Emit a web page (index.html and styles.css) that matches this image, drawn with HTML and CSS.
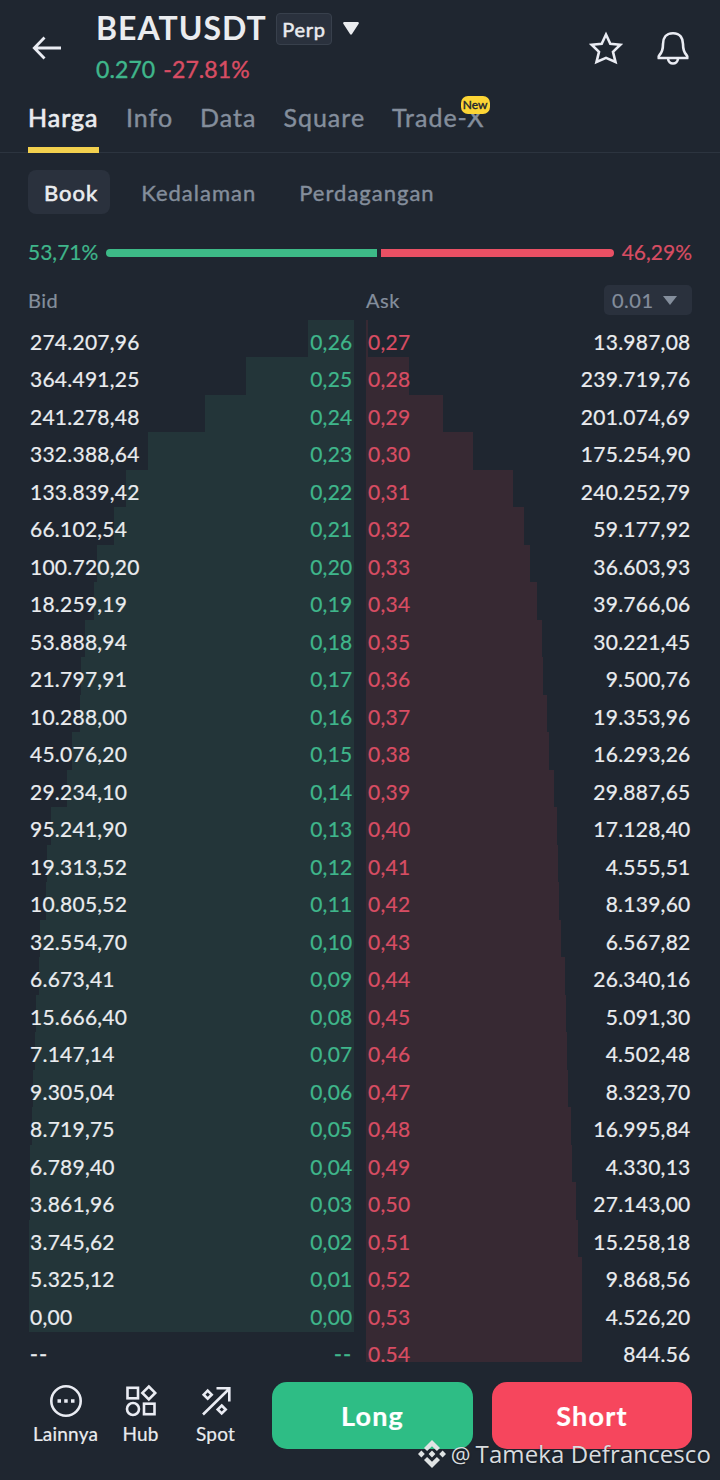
FILE: index.html
```html
<!DOCTYPE html>
<html lang="id">
<head>
  <meta charset="UTF-8" />
  <meta name="viewport" content="width=device-width, initial-scale=1.0"/>
  <title>BEATUSDT Perp</title>
  <link rel="stylesheet" href="styles.css">
</head>
<body>
  <div class="screen">
    <header class="header">
      <svg class="back" width="30" height="24" viewBox="0 0 30 24">
        <path d="M29 12H3M12.500 1.500L2.300 12L12.500 22.500" />
      </svg>
      <div class="pair">
        <div class="pair-top">
          <h1>BEATUSDT</h1>
          <span class="perp">Perp</span>
          <svg class="caret" width="16" height="13" viewBox="0 0 16 13"><path d="M1 0H15Q16.500 0.500 15.500 2L9 12Q8 13.500 7 12L0.500 2Q-0.500 0.500 1 0Z" /></svg>
        </div>
        <div class="pair-price">
          <span class="green">0.270</span>
          <span class="red">-27.81%</span>
        </div>
      </div>
      <div class="actions">
        <svg width="34" height="34" viewBox="0 0 34 34">
          <path d="M17 3.500L21.300 12.700L31.300 13.800L24 20.900L26.500 31L17 26.800L7.500 31L10 20.900L2.700 13.800L12.700 12.700Z" />
        </svg>
        <svg width="34" height="36" viewBox="0 0 34 36">
          <path d="M17 2.300C9.500 2.300 7 7.500 7 13C7 19.500 6 21.500 3.500 24Q2.300 25.200 2.700 27H31.300Q31.700 25.200 30.500 24C28 21.500 27 19.500 27 13C27 7.500 24.500 2.300 17 2.300ZM12 27.500C12.500 34.200 21.500 34.200 22 27.500" />
        </svg>
      </div>
    </header>

    <nav class="tabs">
      <a class="tab active">Harga</a>
      <a class="tab">Info</a>
      <a class="tab">Data</a>
      <a class="tab">Square</a>
      <a class="tab">Trade-X<span class="new">New</span></a>
    </nav>

    <nav class="subtabs">
      <a class="subtab active">Book</a>
      <a class="subtab">Kedalaman</a>
      <a class="subtab">Perdagangan</a>
    </nav>

    <div class="ratio">
      <span class="green">53,71%</span>
      <div class="ratio-bar">
        <div class="ratio-bid" style="flex-grow: 53.71"></div>
        <div class="ratio-ask" style="flex-grow: 46.29"></div>
      </div>
      <span class="red">46,29%</span>
    </div>

    <div class="book-head">
      <span>Bid</span>
      <span>Ask</span>
      <span class="step">0.01
        <svg width="14" height="9" viewBox="0 0 14 9"><path d="M0 0H14L7 9Z" /></svg>
      </span>
    </div>

    <main class="book">
      <div class="side" id="bids"></div>
      <div class="side" id="asks"></div>
    </main>

    <footer class="footer">
      <div class="item">
        <svg width="34" height="34" viewBox="0 0 34 34">
          <circle cx="17" cy="17" r="14.700" />
          <path class="fill" d="M8.500 15.200H12V18.700H8.500ZM15.200 15.200H18.700V18.700H15.200ZM22 15.200H25.500V18.700H22Z" />
        </svg>
        <span>Lainnya</span>
      </div>
      <div class="item">
        <svg width="34" height="34" viewBox="0 0 34 34">
          <rect x="3.500" y="3.800" width="10.500" height="10.500" />
          <path d="M24.800 2.500L31.200 8.900L24.800 15.300L18.400 8.900Z" />
          <circle cx="9" cy="25" r="6" />
          <rect x="20" y="19.700" width="10.500" height="10.500" />
        </svg>
        <span>Hub</span>
      </div>
      <div class="item">
        <svg width="34" height="34" viewBox="0 0 34 34">
          <path d="M4 30.500L30 5M17.500 4.300H30.300V17.500" />
          <path d="M8.700 6.700L12.700 10.700L8.700 14.700L4.700 10.700ZM22.700 21.500L26.700 25.500L22.700 29.500L18.700 25.500Z" />
        </svg>
        <span>Spot</span>
      </div>
      <button class="btn long">Long</button>
      <button class="btn short">Short</button>
    </footer>

    <div class="credit">
      <svg width="28" height="28" viewBox="0 0 28 28">
        <path d="M14 0L22 8L18.900 11.100L14 6.200L9.100 11.100L6 8ZM14 28L22 20L18.900 16.900L14 21.800L9.100 16.900L6 20ZM14 10.600L17.400 14L14 17.400L10.600 14ZM3.400 10.600L6.800 14L3.400 17.400L0 14ZM24.600 10.600L28 14L24.600 17.400L21.200 14Z" />
      </svg>
      <span class="at">@</span>
      <span>Tameka Defrancesco</span>
    </div>
  </div>

  <script src="book.js"></script>
</body>
</html>
```
FILE: styles.css
```css
* {
  box-sizing: border-box;
}
body {
  margin: 0;
  background-color: #1f2630;
  color: #eaecef;
  font-family: Lato, "Open Sans", sans-serif;
  -webkit-text-stroke: 0.2px currentColor;
}
svg {
  display: block;
  fill: none;
  stroke: #eaecf3;
  stroke-width: 2.6;
}
.screen {
  position: relative;
  width: 720px;
  height: 1480px;
  overflow: hidden;
}
.green {
  color: #3fb68b;
}
.red {
  color: #d84d63;
}

.header {
  display: flex;
  height: 96px;
  padding: 0 30px 0 32px;
}
.back {
  margin-top: 36px;
  stroke-width: 2.8;
}
.pair {
  flex: 1;
  padding: 9px 0 0 34px;
}
.pair-top {
  display: flex;
  align-items: center;
  height: 40px;
}
h1 {
  margin: -3px 0 0;
  width: 180px;
  font-size: 32px;
  font-weight: 700;
  letter-spacing: 1px;
  -webkit-text-stroke: 0;
}
.perp {
  width: 56px;
  height: 32px;
  border: 1px solid #38404c;
  border-radius: 4px;
  background-color: #2a313d;
  font-size: 20px;
  letter-spacing: 0.8px;
  line-height: 31px;
  text-align: center;
  -webkit-text-stroke: 0.5px currentColor;
}
.caret {
  margin: -2px 0 0 11px;
  fill: #eaecef;
  stroke: none;
}
.pair-price {
  display: flex;
  gap: 8px;
  font-size: 23px;
  letter-spacing: 0.1px;
  line-height: 40px;
  -webkit-text-stroke: 0.4px currentColor;
}
.actions {
  display: flex;
  gap: 33px;
  padding-top: 31px;
}

.tabs {
  display: flex;
  gap: 27px;
  height: 57px;
  padding-left: 28px;
  border-bottom: 1px solid #2c343f;
  color: #848e9c;
  font-size: 25px;
  letter-spacing: 1px;
  line-height: 43px;
  -webkit-text-stroke: 0.4px currentColor;
}
.tab {
  position: relative;
  height: 57px;
}
.tab.active {
  width: 71px;
  border-bottom: 6px solid #f2d04e;
  color: #eaecef;
  -webkit-text-stroke: 0.7px currentColor;
}
.new {
  position: absolute;
  top: 0;
  right: -5px;
  width: 29px;
  height: 18px;
  border-radius: 7px;
  background-color: #fcd535;
  color: #202630;
  font-size: 12px;
  letter-spacing: 0;
  line-height: 18px;
  text-align: center;
}

.subtabs {
  display: flex;
  padding: 17px 28px 0;
  color: #848e9c;
  font-size: 22px;
  letter-spacing: 1px;
  line-height: 46px;
  -webkit-text-stroke: 0.4px currentColor;
}
.subtab {
  height: 44px;
  padding: 0 12px 0 16px;
  margin-right: 15px;
  border-radius: 8px;
}
.subtab.active {
  background-color: #2a313d;
  color: #eaecef;
  -webkit-text-stroke: 0.6px currentColor;
}

.ratio {
  display: flex;
  align-items: center;
  gap: 8px;
  height: 50px;
  margin: 14px 28px 0;
  font-size: 21px;
}
.ratio span {
  padding-bottom: 3px;
}
.ratio-bar {
  display: flex;
  flex: 1;
  gap: 4px;
}
.ratio-bid {
  height: 8px;
  border-radius: 4px 0 0 4px;
  background-color: #3dba87;
}
.ratio-ask {
  height: 8px;
  border-radius: 0 4px 4px 0;
  background-color: #ea5064;
}

.book-head {
  display: grid;
  grid-template-columns: 338px 238px 88px;
  align-items: center;
  height: 41px;
  padding: 3px 28px 0;
  color: #848e9c;
  font-size: 20px;
  letter-spacing: 0.5px;
}
.step {
  display: flex;
  align-items: center;
  gap: 9px;
  height: 30px;
  padding-left: 8px;
  border-radius: 5px;
  background-color: #2a313d;
}
.step svg {
  fill: #848e9c;
  stroke: none;
}

.book {
  display: flex;
  gap: 12px;
  height: 1043px;
  padding: 0.5px 28px 0;
  overflow: hidden;
}
.side {
  width: 326px;
}
.row {
  display: flex;
  justify-content: space-between;
  height: 37.5px;
  padding: 6px 2px 0;
  background-repeat: no-repeat;
  font-size: 21px;
  line-height: 31px;
  letter-spacing: 0.25px;
}
.row.bid {
  background-image: linear-gradient(#233539, #233539);
  background-position: right top;
}
.row.ask {
  background-image: linear-gradient(#372933, #372933);
}
.row span:last-child {
  margin-right: -0.5px;
}
.row.empty {
  letter-spacing: 1.5px;
  -webkit-text-stroke: 0.5px currentColor;
}

.footer {
  display: flex;
  height: 118px;
  padding: 20px 28px 0;
}
.item {
  display: flex;
  flex-direction: column;
  align-items: center;
  width: 75px;
  font-size: 19px;
  letter-spacing: 0.2px;
}
.item span {
  margin-top: 4px;
}
.item svg {
  margin-top: 2px;
}
.item .fill {
  fill: #eaecf3;
  stroke: none;
}
.btn {
  width: 200px;
  height: 67px;
  padding: 0;
  border: none;
  border-radius: 15px;
  color: #fff;
  font-family: inherit;
  font-size: 27px;
  font-weight: 700;
  letter-spacing: 1.2px;
}
.long {
  width: 201px;
  margin: 0 19px;
  background-color: #2ebd85;
}
.short {
  background-color: #f6465d;
}

/* credit line over the buttons */
.credit {
  position: absolute;
  right: 9px;
  bottom: 10px;
  display: flex;
  align-items: center;
  gap: 5px;
  color: #d9dcdf;
  font-family: "Open Sans", sans-serif;
  font-size: 24px;
  letter-spacing: 0.1px;
  text-shadow: 0 1px 2px rgba(0,0,0,0.4);
  -webkit-text-stroke: 0;
}
.credit svg {
  fill: #e0e3e4;
  stroke: none;
}
.at {
  font-size: 22px;
}
```
FILE: book.js
```js
// [price, amount, depth bar width]
const bids = [
  ["0,26", "274.207,96", 46],
  ["0,25", "364.491,25", 108],
  ["0,24", "241.278,48", 149],
  ["0,23", "332.388,64", 206],
  ["0,22", "133.839,42", 228],
  ["0,21", "66.102,54", 240],
  ["0,20", "100.720,20", 257],
  ["0,19", "18.259,19", 260],
  ["0,18", "53.888,94", 269],
  ["0,17", "21.797,91", 273],
  ["0,16", "10.288,00", 274],
  ["0,15", "45.076,20", 282],
  ["0,14", "29.234,10", 287],
  ["0,13", "95.241,90", 303],
  ["0,12", "19.313,52", 307],
  ["0,11", "10.805,52", 308],
  ["0,10", "32.554,70", 314],
  ["0,09", "6.673,41", 315],
  ["0,08", "15.666,40", 318],
  ["0,07", "7.147,14", 319],
  ["0,06", "9.305,04", 321],
  ["0,05", "8.719,75", 322],
  ["0,04", "6.789,40", 324],
  ["0,03", "3.861,96", 324],
  ["0,02", "3.745,62", 325],
  ["0,01", "5.325,12", 325],
  ["0,00", "0,00", 325],
  ["--", "--", 0]
];

const asks = [
  ["0,27", "13.987,08", 2],
  ["0,28", "239.719,76", 43],
  ["0,29", "201.074,69", 77],
  ["0,30", "175.254,90", 107],
  ["0,31", "240.252,79", 147],
  ["0,32", "59.177,92", 158],
  ["0,33", "36.603,93", 164],
  ["0,34", "39.766,06", 171],
  ["0,35", "30.221,45", 176],
  ["0,36", "9.500,76", 177],
  ["0,37", "19.353,96", 181],
  ["0,38", "16.293,26", 183],
  ["0,39", "29.887,65", 188],
  ["0,40", "17.128,40", 191],
  ["0,41", "4.555,51", 192],
  ["0,42", "8.139,60", 193],
  ["0,43", "6.567,82", 195],
  ["0,44", "26.340,16", 199],
  ["0,45", "5.091,30", 200],
  ["0,46", "4.502,48", 201],
  ["0,47", "8.323,70", 202],
  ["0,48", "16.995,84", 205],
  ["0,49", "4.330,13", 206],
  ["0,50", "27.143,00", 210],
  ["0,51", "15.258,18", 212],
  ["0,52", "9.868,56", 216],
  ["0,53", "4.526,20", 216],
  ["0,54", "844,56", 216]
];

document.getElementById("bids").innerHTML = bids.map(([price, amount, bar]) =>
  `<div class="row bid${bar ? "" : " empty"}" style="background-size: ${bar}px 100%"><span>${amount}</span><span class="green">${price}</span></div>`
).join("");

document.getElementById("asks").innerHTML = asks.map(([price, amount, bar]) =>
  `<div class="row ask" style="background-size: ${bar}px 100%"><span class="red">${price}</span><span>${amount}</span></div>`
).join("");
```
